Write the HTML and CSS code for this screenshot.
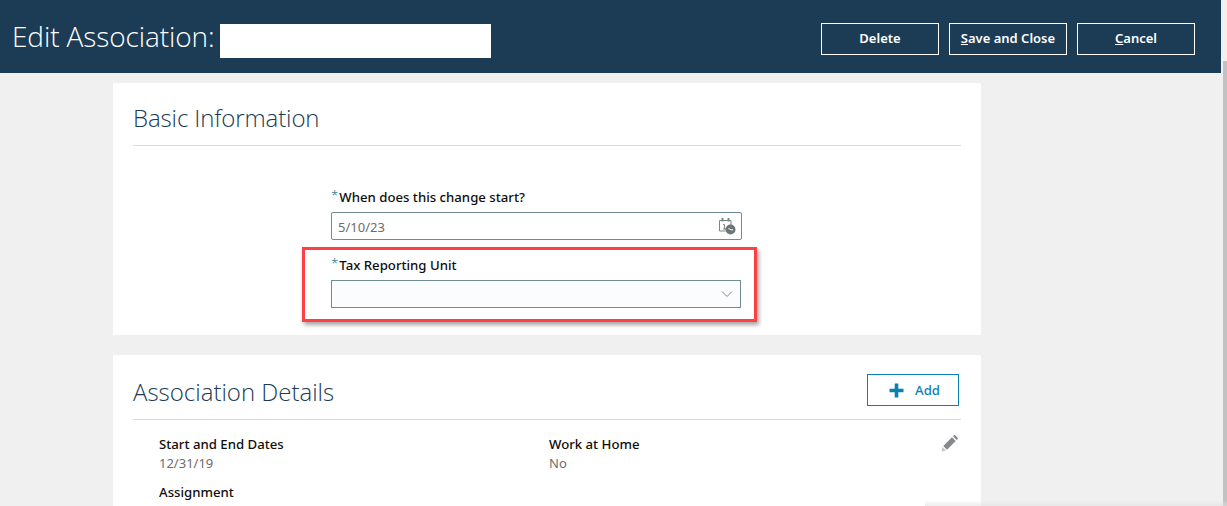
FILE: index.html
```html
<!DOCTYPE html>
<html lang="en">
<head>
<meta charset="utf-8">
<title>Edit Association</title>
<link rel="stylesheet" href="styles.css">
</head>
<body>
<div class="page">
  <header class="topbar">
    <div class="title-wrap">
      <h1 class="title">Edit Association:</h1>
      <div class="redaction"></div>
    </div>
    <div class="actions">
      <button class="btn">Delete</button>
      <button class="btn"><span><u>S</u>ave and Close</span></button>
      <button class="btn"><span><u>C</u>ancel</span></button>
    </div>
  </header>
  <main class="content">
    <section class="card card-basic">
      <div class="card-head"><h2 class="card-title card-title-tight">Basic Information</h2></div>
      <div class="form">
        <div class="field field-date">
          <label class="label"><span class="req">*</span>When does this change start?</label>
          <div class="input input-date">
            <span class="input-value">5/10/23</span>
            <svg class="icon-cal" width="18" height="18" viewBox="0 0 18 18" aria-hidden="true">
              <path d="M1.5 3.500h11.500v5M1.500 3.500v10.500h6" fill="none" stroke="#7b8487" stroke-width="1"/>
              <rect x="3.500" y="1" width="2" height="3.500" fill="#7b8487"/>
              <rect x="9.500" y="1" width="2" height="3.500" fill="#7b8487"/>
              <path d="M5 7.500h1.500v4.500M5 12h3" fill="none" stroke="#7b8487" stroke-width="1"/>
              <circle cx="12.500" cy="12.500" r="5" fill="#6d7679"/>
              <path d="M10.500 11.500l2.500 1.300h2" fill="none" stroke="#fff" stroke-width="1"/>
            </svg>
          </div>
        </div>
        <div class="field field-tax">
          <label class="label"><span class="req">*</span>Tax Reporting Unit</label>
          <div class="input input-select">
            <svg class="icon-chev" width="12" height="8" viewBox="0 0 12 8" aria-hidden="true">
              <path d="M1 1.500l5 5 5-5" fill="none" stroke="#7b8487" stroke-width="1"/>
            </svg>
          </div>
          <div class="highlight"></div>
        </div>
      </div>
    </section>
    <section class="card card-details">
      <div class="card-head card-head-row">
        <h2 class="card-title">Association Details</h2>
        <button class="btn-add">
          <svg width="15" height="15" viewBox="0 0 15 15" aria-hidden="true">
            <path d="M7.500 .5v14M.5 7.500h14" stroke="#0b80b0" stroke-width="3.600" fill="none"/>
          </svg>
          <span>Add</span>
        </button>
      </div>
      <div class="details">
        <div class="details-grid">
          <div class="item">
            <div class="item-label">Start and End Dates</div>
            <div class="item-value">12/31/19</div>
          </div>
          <div class="item">
            <div class="item-label">Work at Home</div>
            <div class="item-value">No</div>
          </div>
          <div class="item">
            <div class="item-label">Assignment</div>
          </div>
        </div>
        <svg class="icon-edit" width="17" height="17" viewBox="0 0 17 17" aria-hidden="true">
          <path d="M.5 16.500l1-4.500 3.500 3.500z" fill="#c2c5c7"/>
          <path d="M2.300 11L11 2.300l3.700 3.700L6 14.700z" fill="#85898c"/>
          <path d="M12 1.300l1-1c.4-.3.900-.3 1.200 0l2.500 2.500c.3.300.3.800 0 1.200l-1 1z" fill="#85898c"/>
        </svg>
      </div>
    </section>
  </main>
  <div class="scrollbar"></div>
  <div class="corner-fade"></div>
</div>
</body>
</html>
```
FILE: styles.css
```css
* { box-sizing: border-box; }
html, body { margin: 0; padding: 0; height: 100%; overflow: hidden; }
body { background: #f0f0f0; font-family: "Noto Sans", "Open Sans", sans-serif; color: #161513; }
.page { position: relative; width: 1227px; height: 506px; overflow: hidden; }

.topbar {
  width: 1221px; height: 73px; background: #1c3b54;
  display: flex; align-items: flex-start; justify-content: space-between;
  padding: 23px 26px 0 12px;
}
.title-wrap { display: flex; align-items: flex-start; gap: 5px; }
.title {
  margin: -7px 0 0; font-family: "Open Sans", sans-serif; font-weight: 300;
  font-size: 28px; line-height: 40px; letter-spacing: -.1px; color: #fff; white-space: nowrap;
}
.redaction { width: 271px; height: 34px; margin-top: 1px; background: #fff; }
.actions { display: flex; gap: 10px; }
.btn {
  width: 118px; height: 32px; border: 1px solid #fff; background: transparent; padding: 0 0 2px;
  color: #fff; font-family: "Noto Sans", sans-serif; font-size: 13px; font-weight: 600; line-height: 28px;
}

.content { width: 1221px; padding: 10px 0 0 113px; display: flex; flex-direction: column; gap: 20px; }
.card { width: 868px; background: #fff; padding: 0 20px; }
.card-basic { height: 252px; }
.card-details { height: 170px; }
.card-head { height: 63px; border-bottom: 1px solid #d6dde2; padding-top: 17px; }
.card-head-row { display: flex; justify-content: space-between; align-items: flex-start; height: 65px; padding-top: 19px; padding-right: 2px; }
.card-title {
  margin: 0; font-family: "Open Sans", sans-serif; font-weight: 300; font-size: 24px;
  line-height: 36px; color: #1c3b54; white-space: nowrap;
}
.card-title-tight { letter-spacing: -.12px; }

.form { padding: 41px 0 0 198px; display: flex; flex-direction: column; }
.field { position: relative; width: 411px; }
.field-date { height: 53px; }
.field-tax { margin-top: 15px; }
.label { display: block; height: 20px; font-size: 13.2px; font-weight: 500; line-height: 20px; color: #0f0e0d; white-space: nowrap; }
.req { color: #1a6f96; font-weight: 300; margin-right: 1px; position: relative; top: -2px; }
.input {
  display: flex; align-items: center; justify-content: space-between;
  height: 28px; margin-top: 5px; border: 1px solid #6f8b95; border-radius: 2px; background: #fff;
}
.input-date { padding: 0 5px 0 6px; }
.input-value { font-size: 13px; line-height: 20px; padding-top: 2px; color: #6d6d6d; }
.input-select { width: 410px; background: #fbfcfe; justify-content: flex-end; padding-right: 7px; border-radius: 0; }
.highlight {
  position: absolute; left: -29px; top: -8px; width: 455px; height: 75px;
  border: 3px solid #fb4146; box-shadow: 2px 3px 4px rgba(0, 0, 0, .35);
}

.btn-add {
  display: flex; align-items: center; justify-content: flex-end; gap: 11px;
  width: 92px; height: 32px; border: 1px solid #0b80b0; background: #fff; padding: 0 18px 0 0;
  color: #0b80b0; font-family: "Noto Sans", sans-serif; font-size: 13.2px; font-weight: 500;
}

.details { position: relative; padding: 15px 0 0 26px; }
.details-grid { display: grid; grid-template-columns: 390px 1fr; row-gap: 10px; }
.item-label { font-size: 13.2px; font-weight: 500; line-height: 19px; color: #0f0e0d; white-space: nowrap; }
.item-value { font-size: 13px; line-height: 19px; color: #6d6d6d; }
.icon-edit { position: absolute; right: 3px; top: 15px; }

.scrollbar { position: absolute; right: 0; top: 61px; width: 4px; height: 445px; background: #c2c2c2; }
.corner-fade {
  position: absolute; left: 925px; right: 0; bottom: 0; height: 6px;
  background: linear-gradient(to bottom, rgba(255, 255, 255, 0), rgba(225, 225, 225, .6));
}
```
